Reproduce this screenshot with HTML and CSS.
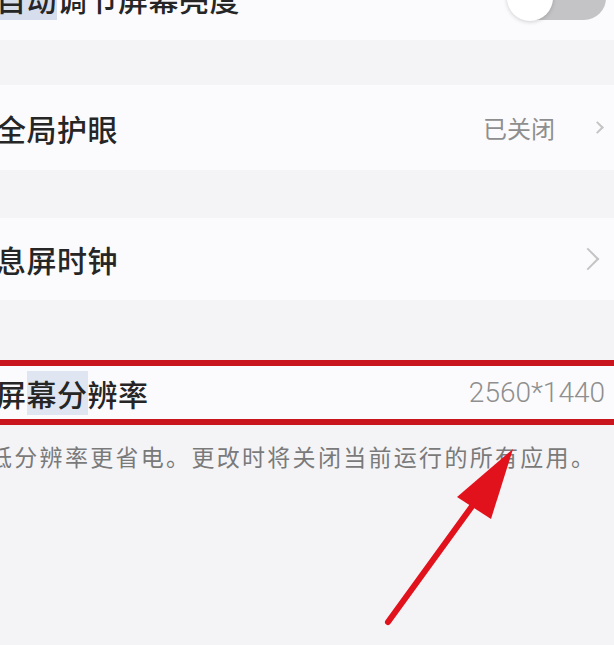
FILE: index.html
```html
<!DOCTYPE html>
<html lang="zh-CN">
<head>
<meta charset="utf-8">
<title>显示设置</title>
<link rel="stylesheet" href="styles.css">
</head>
<body>
<div class="screen">
  <div class="row r1">
    <span class="label"><span class="sel">自动</span>调节屏幕亮度</span>
    <span class="toggle"><span class="knob"></span></span>
  </div>
  <div class="gap g1"></div>
  <div class="row r2">
    <span class="label">全局护眼</span>
    <span class="right"><span class="value">已关闭</span><span class="chev small"></span></span>
  </div>
  <div class="gap g2"></div>
  <div class="row r3">
    <span class="label">息屏时钟</span>
    <span class="chev big"></span>
  </div>
  <div class="gap g3"></div>
  <div class="row r4">
    <span class="label">屏<span class="sel2">幕分</span>辨率</span>
    <span class="res">2560*1440</span>
  </div>
  <p class="caption">低分辨率更省电。更改时将关闭当前运行的所有应用。</p>
</div>
<svg class="arrow" width="614" height="645" viewBox="0 0 614 645">
  <line x1="388" y1="622" x2="478" y2="498" stroke="#e2121c" stroke-width="6" stroke-linecap="round"/>
  <polygon points="513,449 457,497 491,519" fill="#e2121c"/>
</svg>
</body>
</html>
```
FILE: styles.css
```css
html, body {
  margin: 0;
  padding: 0;
}
body {
  width: 614px;
  height: 645px;
  overflow: hidden;
  background: #f4f4f7;
  font-family: "Noto Sans CJK SC", "Noto Sans", sans-serif;
  position: relative;
}
.screen {
  display: flex;
  flex-direction: column;
  margin-left: -4px;
  width: 618px;
}
.row {
  display: flex;
  align-items: center;
  justify-content: space-between;
  background: #fbfbfd;
  box-sizing: border-box;
  padding-right: 10px;
}
.label {
  font-size: 30px;
  font-weight: 500;
  color: #262626;
  letter-spacing: 0.5px;
}
.r1 {
  height: 85px;
  margin-top: -45px;
  padding-right: 8px;
}
.r2 { height: 85px; }
.r3 { height: 82px; }
.r4 {
  height: 65px;
  border-top: 6px solid #c9161e;
  border-bottom: 6px solid #c9161e;
  padding-right: 9px;
}
.gap { background: #f4f4f7; }
.g1 { height: 45px; }
.g2 { height: 48px; }
.g3 { height: 60px; }
.sel {
  background: #d6deee;
}
.sel2 {
  background: #dfe5f1;
}
.toggle {
  position: relative;
  width: 98px;
  height: 44px;
  border-radius: 22px;
  background: #c4c4c6;
  display: flex;
  align-items: center;
}
.knob {
  width: 46px;
  height: 46px;
  border-radius: 50%;
  background: #ffffff;
  box-shadow: 0 1px 4px rgba(0,0,0,0.18);
  margin-left: -1px;
}
.right {
  display: flex;
  align-items: center;
  gap: 38px;
}
.value {
  font-size: 24px;
  color: #8e8e8e;
}
.chev {
  display: inline-block;
  border-right: 2px solid #c4c4c4;
  border-top: 2px solid #c4c4c4;
  transform: rotate(45deg);
}
.chev.small {
  width: 7px;
  height: 7px;
  margin-right: 2px;
}
.chev.big {
  width: 14px;
  height: 14px;
  border-width: 2px;
  margin-right: 8px;
}
.res {
  font-family: Roboto, "Noto Sans", sans-serif;
  font-size: 28px;
  font-weight: 300;
  color: #8f8f8f;
}
.caption {
  margin: 0;
  padding: 14px 0 0 0;
  margin-left: -7px;
  font-size: 23px;
  letter-spacing: 2.3px;
  color: #7a7a7a;
  white-space: nowrap;
}
.arrow {
  position: absolute;
  left: 0;
  top: 0;
  pointer-events: none;
}
```
